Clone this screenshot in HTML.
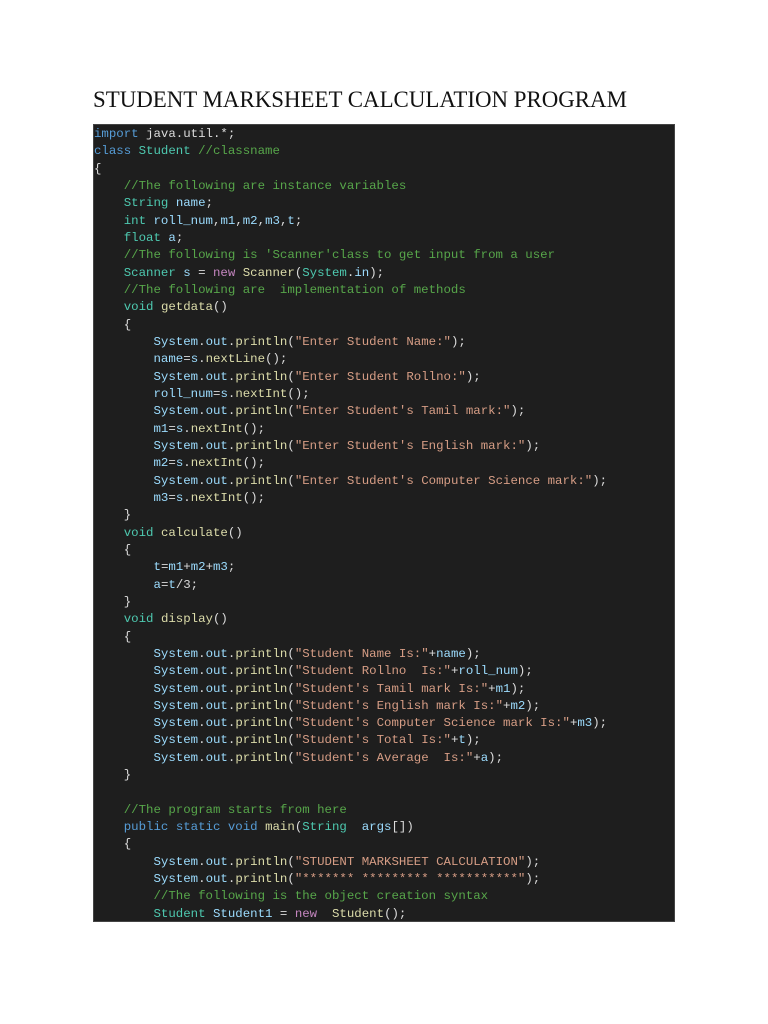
<!DOCTYPE html>
<html><head><meta charset="utf-8"><style>
body{margin:0;background:#fff;width:768px;height:1024px;overflow:hidden}
h1{position:absolute;left:93px;top:87px;margin:0;font:400 22.9px "Liberation Serif",serif;color:#111;white-space:nowrap}
pre{position:absolute;left:93px;top:124px;width:582px;height:798px;margin:0;background:#1e1e1e;box-sizing:border-box;padding:1px 0 0 0;font:12.4px/17.33px "Liberation Mono",monospace;color:#dcdcdc;border:1px solid #444}
.k{color:#569cd6}.t{color:#4ec9b0}.c{color:#57a64a}.s{color:#d69d85}.m{color:#dcdcaa}.v{color:#9cdcfe}.n{color:#c586c0}
</style></head><body>
<h1>STUDENT MARKSHEET CALCULATION PROGRAM</h1>
<pre><span class="k">import</span> java.util.*;
<span class="k">class</span> <span class="t">Student</span> <span class="c">//classname</span>
{
    <span class="c">//The following are instance variables</span>
    <span class="t">String</span> <span class="v">name</span>;
    <span class="t">int</span> <span class="v">roll_num</span>,<span class="v">m1</span>,<span class="v">m2</span>,<span class="v">m3</span>,<span class="v">t</span>;
    <span class="t">float</span> <span class="v">a</span>;
    <span class="c">//The following is 'Scanner'class to get input from a user</span>
    <span class="t">Scanner</span> <span class="v">s</span> = <span class="n">new</span> <span class="m">Scanner</span>(<span class="t">System</span>.<span class="v">in</span>);
    <span class="c">//The following are  implementation of methods</span>
    <span class="t">void</span> <span class="m">getdata</span>()
    {
        <span class="v">System</span>.<span class="v">out</span>.<span class="m">println</span>(<span class="s">"Enter Student Name:"</span>);
        <span class="v">name</span>=<span class="v">s</span>.<span class="m">nextLine</span>();
        <span class="v">System</span>.<span class="v">out</span>.<span class="m">println</span>(<span class="s">"Enter Student Rollno:"</span>);
        <span class="v">roll_num</span>=<span class="v">s</span>.<span class="m">nextInt</span>();
        <span class="v">System</span>.<span class="v">out</span>.<span class="m">println</span>(<span class="s">"Enter Student's Tamil mark:"</span>);
        <span class="v">m1</span>=<span class="v">s</span>.<span class="m">nextInt</span>();
        <span class="v">System</span>.<span class="v">out</span>.<span class="m">println</span>(<span class="s">"Enter Student's English mark:"</span>);
        <span class="v">m2</span>=<span class="v">s</span>.<span class="m">nextInt</span>();
        <span class="v">System</span>.<span class="v">out</span>.<span class="m">println</span>(<span class="s">"Enter Student's Computer Science mark:"</span>);
        <span class="v">m3</span>=<span class="v">s</span>.<span class="m">nextInt</span>();
    }
    <span class="t">void</span> <span class="m">calculate</span>()
    {
        <span class="v">t</span>=<span class="v">m1</span>+<span class="v">m2</span>+<span class="v">m3</span>;
        <span class="v">a</span>=<span class="v">t</span>/3;
    }
    <span class="t">void</span> <span class="m">display</span>()
    {
        <span class="v">System</span>.<span class="v">out</span>.<span class="m">println</span>(<span class="s">"Student Name Is:"</span>+<span class="v">name</span>);
        <span class="v">System</span>.<span class="v">out</span>.<span class="m">println</span>(<span class="s">"Student Rollno  Is:"</span>+<span class="v">roll_num</span>);
        <span class="v">System</span>.<span class="v">out</span>.<span class="m">println</span>(<span class="s">"Student's Tamil mark Is:"</span>+<span class="v">m1</span>);
        <span class="v">System</span>.<span class="v">out</span>.<span class="m">println</span>(<span class="s">"Student's English mark Is:"</span>+<span class="v">m2</span>);
        <span class="v">System</span>.<span class="v">out</span>.<span class="m">println</span>(<span class="s">"Student's Computer Science mark Is:"</span>+<span class="v">m3</span>);
        <span class="v">System</span>.<span class="v">out</span>.<span class="m">println</span>(<span class="s">"Student's Total Is:"</span>+<span class="v">t</span>);
        <span class="v">System</span>.<span class="v">out</span>.<span class="m">println</span>(<span class="s">"Student's Average  Is:"</span>+<span class="v">a</span>);
    }

    <span class="c">//The program starts from here</span>
    <span class="k">public</span> <span class="k">static</span> <span class="k">void</span> <span class="m">main</span>(<span class="t">String</span>  <span class="v">args</span>[])
    {
        <span class="v">System</span>.<span class="v">out</span>.<span class="m">println</span>(<span class="s">"STUDENT MARKSHEET CALCULATION"</span>);
        <span class="v">System</span>.<span class="v">out</span>.<span class="m">println</span>(<span class="s">"******* ********* ***********"</span>);
        <span class="c">//The following is the object creation syntax</span>
        <span class="t">Student</span> <span class="v">Student1</span> = <span class="n">new</span>  <span class="m">Student</span>();
</pre>
</body></html>
